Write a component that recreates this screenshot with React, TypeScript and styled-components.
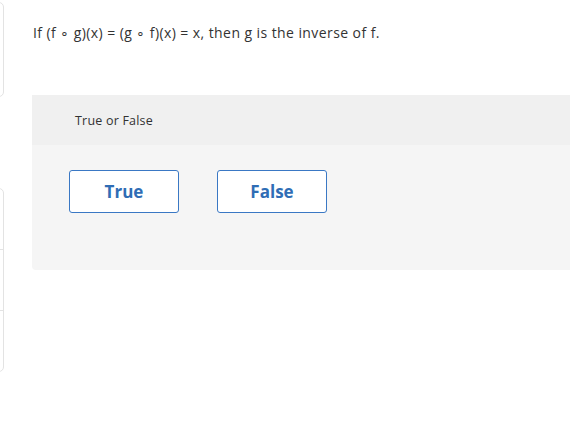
import React from "react";
import styled, { createGlobalStyle } from "styled-components";

const Global = createGlobalStyle`
  html, body { margin: 0; padding: 0; background: #ffffff; }
  body { font-family: "Open Sans", "Liberation Sans", sans-serif; color: #333; overflow: hidden; }
`;

const Page = styled.div`
  display: grid;
  grid-template-columns: 32px 1fr;
  width: 570px;
  height: 445px;
  overflow: hidden;
`;

const Rail = styled.div`
  display: flex;
  flex-direction: column;
  padding-top: 2px;
`;

const RailCard = styled.div<{ $h: number; $mt: number }>`
  box-sizing: border-box;
  margin-left: -40px;
  width: 44px;
  height: ${(p) => p.$h}px;
  margin-top: ${(p) => p.$mt}px;
  border: 1px solid #e3e3e3;
  border-radius: 5px;
  display: flex;
  flex-direction: column;
`;

const RailRow = styled.div`
  flex: 1;
  & + & { border-top: 1px solid #e3e3e3; }
`;

const Main = styled.div`
  display: flex;
  flex-direction: column;
  margin-right: -10px;
`;

const Question = styled.div`
  padding: 23px 0 0 1px;
  height: 95px;
  box-sizing: border-box;
  font-size: 14px;
  letter-spacing: 0.42px;
  color: #333333;
`;

const Panel = styled.div`
  border-radius: 0 0 0 4px;
  background: #f5f5f5;
  height: 175px;
  display: flex;
  flex-direction: column;
`;

const PanelHeader = styled.div`
  background: #f0f0f0;
  height: 50px;
  display: flex;
  align-items: center;
  padding-left: 43px;
  font-size: 12.5px;
  letter-spacing: 0.2px;
  color: #333;
`;

const Choices = styled.div`
  display: flex;
  gap: 38px;
  padding: 25px 0 0 37px;
`;

const Choice = styled.button`
  box-sizing: border-box;
  width: 110px;
  height: 43px;
  background: #ffffff;
  border: 1px solid #3a78c4;
  border-radius: 3px;
  color: #2f6db5;
  font-family: "Open Sans", "Liberation Sans", sans-serif;
  font-weight: 700;
  font-size: 17px;
  padding: 0;
  cursor: pointer;
`;

export default function App() {
  return (
    <>
      <Global />
      <Page>
        <Rail>
          <RailCard $h={95} $mt={0}>
            <RailRow />
          </RailCard>
          <RailCard $h={184} $mt={91}>
            <RailRow />
            <RailRow />
            <RailRow />
          </RailCard>
        </Rail>
        <Main>
          <Question>If (f ∘ g)(x) = (g ∘ f)(x) = x, then g is the inverse of f.</Question>
          <Panel>
            <PanelHeader>True or False</PanelHeader>
            <Choices>
              <Choice>True</Choice>
              <Choice>False</Choice>
            </Choices>
          </Panel>
        </Main>
      </Page>
    </>
  );
}
